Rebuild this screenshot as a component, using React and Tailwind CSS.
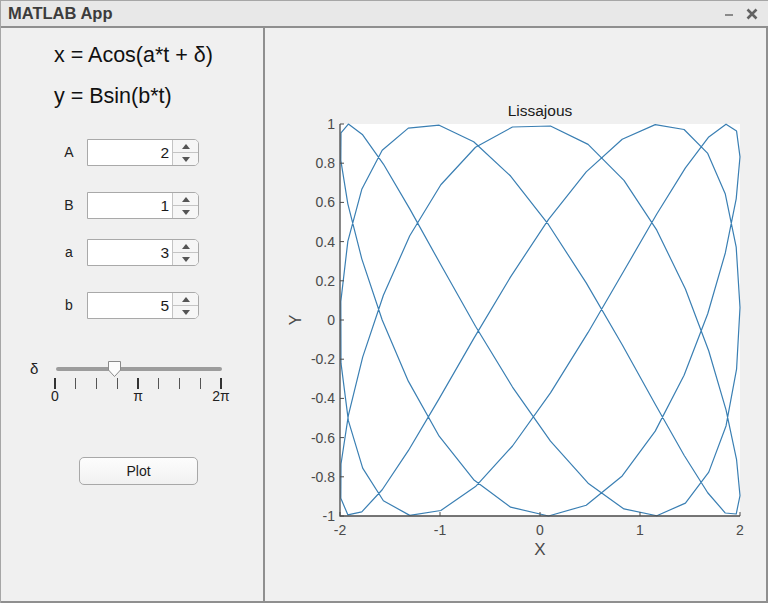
import { useMemo } from 'react'

const FONT = { fontFamily: '"Liberation Sans", Arial, sans-serif' }

// plot geometry, in the right panel's own coordinates
const AX = { left: 75, right: 475, top: 96, bottom: 488 }
const DELTA = 2.48

function toPx(x, y) {
  const px = AX.left + ((x + 2) / 4) * (AX.right - AX.left)
  const py = AX.top + ((1 - y) / 2) * (AX.bottom - AX.top)
  return [px, py]
}

function Spinner({ value }) {
  return (
    <div className="flex h-[27px] w-[112px] rounded-r-[5px] border border-[#a9a9a9] bg-white">
      <div className="flex flex-1 items-center justify-end pr-[3px] text-[15.5px] text-[#1a1a1a]">{value}</div>
      <div className="flex w-[26px] flex-col rounded-r-[4px] border-l border-[#c4c4c4] bg-[#f6f6f6]">
        <div className="flex flex-1 items-center justify-center border-b border-[#c4c4c4]">
          <svg width="8" height="5" viewBox="0 0 8 5">
            <path d="M0 5 L4 0 L8 5 Z" fill="#555" />
          </svg>
        </div>
        <div className="flex flex-1 items-center justify-center">
          <svg width="8" height="5" viewBox="0 0 8 5">
            <path d="M0 0 L4 5 L8 0 Z" fill="#555" />
          </svg>
        </div>
      </div>
    </div>
  )
}

function SpinRow({ label, value, className }) {
  return (
    <div className={'flex items-center pl-[58px] ' + className}>
      <div className="w-[20px] text-center text-[14px] text-[#222]">{label}</div>
      <div className="ml-[8px]">
        <Spinner value={value} />
      </div>
    </div>
  )
}

function DeltaSlider() {
  const ticks = [0, 1, 2, 3, 4, 5, 6, 7, 8]
  const labels = { 0: '0', 4: 'π', 8: '2π' }
  return (
    <div className="mt-[42px] flex pl-[29px]">
      <div className="flex h-[16px] w-[24px] items-center text-[15px] text-[#222]">δ</div>
      <div className="w-[168px]">
        <div className="relative flex h-[16px] items-center">
          <div className="ml-[2px] h-[4px] flex-1 rounded-full bg-[#9c9c9c]" />
          <svg className="absolute left-[54px] top-0" width="13" height="16" viewBox="0 0 13 16">
            <path d="M0.5 0.5 H12.5 V9 L6.5 15.5 L0.5 9 Z" fill="#fcfcfc" stroke="#8a8a8a" />
          </svg>
        </div>
        <div className="mt-[1px] flex justify-between">
          {ticks.map((i) => (
            <div key={i} className="flex w-[2px] flex-col items-center">
              <div className={i % 4 === 0 ? 'h-[11px] w-[2px] bg-[#333]' : 'h-[11px] w-[1px] bg-[#555]'} />
              <div className="h-[15px] whitespace-nowrap text-[14px] leading-[15px] text-[#222]">{labels[i] || ''}</div>
            </div>
          ))}
        </div>
      </div>
    </div>
  )
}

function LissajousPlot() {
  const points = useMemo(() => {
    const n = 100
    const out = []
    for (let i = 0; i < n; i++) {
      const t = (2 * Math.PI * i) / (n - 1)
      const [px, py] = toPx(2 * Math.cos(3 * t + DELTA), Math.sin(5 * t))
      out.push(px.toFixed(2) + ',' + py.toFixed(2))
    }
    return out.join(' ')
  }, [])

  const yTicks = [1, 0.8, 0.6, 0.4, 0.2, 0, -0.2, -0.4, -0.6, -0.8, -1]
  const xTicks = [-2, -1, 0, 1, 2]

  return (
    <svg width="501" height="573" viewBox="0 0 501 573" style={FONT}>
      <rect x={AX.left} y={AX.top} width={AX.right - AX.left} height={AX.bottom - AX.top} fill="#fff" />
      <polyline points={points} fill="none" stroke="#3a7fb3" strokeWidth="1.2" strokeLinejoin="round" />
      <path d={`M${AX.left} ${AX.top} V${AX.bottom} H${AX.right}`} fill="none" stroke="#4a4a4a" strokeWidth="1.3" />
      {yTicks.map((v) => {
        const [, py] = toPx(0, v)
        return (
          <g key={v}>
            <line x1={AX.left} x2={AX.left + 4} y1={py} y2={py} stroke="#4a4a4a" />
            <text x={AX.left - 5} y={py} dy="0.36em" textAnchor="end" fontSize="14" fill="#4a4a4a">
              {v}
            </text>
          </g>
        )
      })}
      {xTicks.map((v) => {
        const [px] = toPx(v, 0)
        return (
          <g key={v}>
            <line x1={px} x2={px} y1={AX.bottom} y2={AX.bottom - 4} stroke="#4a4a4a" />
            <text x={px} y={AX.bottom + 19} textAnchor="middle" fontSize="14" fill="#4a4a4a">
              {v}
            </text>
          </g>
        )
      })}
      <text x="275" y="88" textAnchor="middle" fontSize="15.5" fill="#1a1a1a">
        Lissajous
      </text>
      <text x="275" y="527" textAnchor="middle" fontSize="17" fill="#4a4a4a">
        X
      </text>
      <text x="0" y="0" transform="translate(36 292) rotate(-90)" textAnchor="middle" fontSize="16" fill="#4a4a4a">
        Y
      </text>
    </svg>
  )
}

export default function App() {
  return (
    <div className="flex h-[603px] w-[768px] flex-col border-l border-t border-[#a6a6a6] bg-[#f0f0f0]" style={FONT}>
      <div className="flex h-[27px] items-center justify-between border-b-2 border-[#8f8f8f] bg-[#e8e8e8] pl-[7px] pr-[10px]">
        <span className="text-[16.5px] font-bold text-[#3c3c3c]">MATLAB App</span>
        <div className="flex items-center gap-[12px]">
          <svg width="10" height="10" viewBox="0 0 10 10">
            <path d="M1 6 H9" stroke="#8a8a8a" strokeWidth="2" />
          </svg>
          <svg width="12" height="12" viewBox="0 0 12 12">
            <path d="M1.5 1.5 L10.5 10.5 M10.5 1.5 L1.5 10.5" stroke="#626262" strokeWidth="2.6" />
          </svg>
        </div>
      </div>
      <div className="flex flex-1 border-b-2 border-r-2 border-[#8f8f8f]">
        <div className="flex w-[264px] flex-col border-r-2 border-[#8f8f8f] text-[#111]">
          <div className="mt-[15px] pl-[53px] text-[21.5px] leading-[25px]">x = Acos(a*t + δ)</div>
          <div className="mt-[16px] pl-[53px] text-[21.5px] leading-[25px]">y = Bsin(b*t)</div>
          <SpinRow label="A" value={2} className="mt-[30px]" />
          <SpinRow label="B" value={1} className="mt-[26px]" />
          <SpinRow label="a" value={3} className="mt-[20px]" />
          <SpinRow label="b" value={5} className="mt-[26px]" />
          <DeltaSlider />
          <div className="mt-[53px] pl-[78px]">
            <button className="h-[28px] w-[119px] rounded-[5px] border border-[#a8a8a8] bg-gradient-to-b from-[#fdfdfd] to-[#f1f1f1] text-[14px] text-[#1a1a1a]">
              Plot
            </button>
          </div>
        </div>
        <div className="flex-1">
          <LissajousPlot />
        </div>
      </div>
    </div>
  )
}
